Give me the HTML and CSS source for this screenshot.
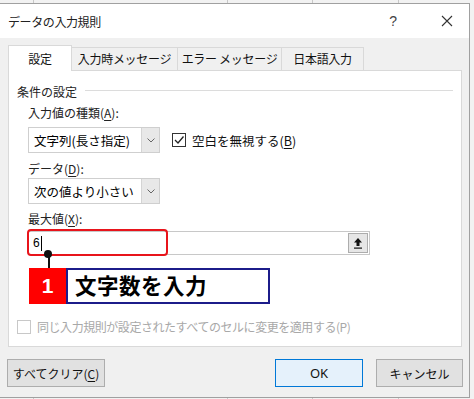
FILE: index.html
```html
<!DOCTYPE html>
<html lang="ja">
<head>
    <meta charset="UTF-8">
    <title>データの入力規則</title>
    <link rel="stylesheet" href="styles.css">
</head>
<body>
    <div class="dialog">
        <div class="titlebar">
            <span class="title">データの入力規則</span>
            <span class="help">?</span>
            <span class="close">
                <svg width="12" height="12" viewBox="0 0 12 12"><path d="M1 1 L11 11 M11 1 L1 11" stroke="#333" stroke-width="1.1" fill="none"/></svg>
            </span>
        </div>

        <div class="tabs">
            <div class="tab active">設定</div>
            <div class="tab">入力時メッセージ</div>
            <div class="tab">エラー メッセージ</div>
            <div class="tab">日本語入力</div>
        </div>

        <div class="panel">
            <div class="group-head">
                <span>条件の設定</span>
                <span class="rule"></span>
            </div>

            <div class="group">
                <div class="label">入力値の種類(<u>A</u>):</div>
                <div class="row">
                    <div class="select">
                        <span class="value">文字列(長さ指定)</span>
                        <span class="arrow"><svg width="8" height="5" viewBox="0 0 8 5"><path d="M0.5 0.5 L4 4 L7.5 0.5" stroke="#666" fill="none"/></svg></span>
                    </div>
                    <label class="check">
                        <span class="box"><svg width="12" height="12" viewBox="0 0 12 12"><path d="M2 6 L5 9 L10.5 2.5" stroke="#222" stroke-width="1.3" fill="none"/></svg></span>
                        <span>空白を無視する(<u>B</u>)</span>
                    </label>
                </div>

                <div class="label l2">データ(<u>D</u>):</div>
                <div class="select s2">
                    <span class="value">次の値より小さい</span>
                    <span class="arrow"><svg width="8" height="5" viewBox="0 0 8 5"><path d="M0.5 0.5 L4 4 L7.5 0.5" stroke="#666" fill="none"/></svg></span>
                </div>

                <div class="label l3">最大値(<u>X</u>):</div>
                <div class="field">
                    <span class="value">6<span class="caret"></span></span>
                    <span class="ref-btn"><svg width="10" height="12" viewBox="0 0 10 12"><path d="M5 1 L9 5.5 L6.5 5.5 L6.5 9 L3.5 9 L3.5 5.5 L1 5.5 Z" fill="#111"/><rect x="1" y="10.5" width="8" height="1.2" fill="#111"/></svg></span>
                    <span class="highlight"></span>
                </div>

                <div class="callout">
                    <span class="dot"></span>
                    <span class="stem"></span>
                    <div class="note">
                        <span class="num">1</span>
                        <span class="note-text">文字数を入力</span>
                    </div>
                </div>
            </div>

            <label class="check disabled">
                <span class="box"></span>
                <span>同じ入力規則が設定されたすべてのセルに変更を適用する(P)</span>
            </label>
        </div>

        <div class="buttons">
            <button class="btn clear">すべてクリア(<u>C</u>)</button>
            <button class="btn ok">OK</button>
            <button class="btn cancel">キャンセル</button>
        </div>
    </div>
</body>
</html>
```

FILE: styles.css
```css
body {
    margin: 0;
    font-family: "Noto Sans CJK JP", "Noto Sans", sans-serif;
    font-size: 12px;
    color: #000;
    background-color: #f2f2f2;
    background-image:
        linear-gradient(to right, transparent 33px, #c8c8c8 33px, #c8c8c8 34px, transparent 34px,
            transparent 227px, #c8c8c8 227px, #c8c8c8 228px, transparent 228px,
            transparent 312px, #c8c8c8 312px, #c8c8c8 313px, transparent 313px,
            transparent 398px, #c8c8c8 398px, #c8c8c8 399px, transparent 399px);
    width: 474px;
    height: 399px;
    overflow: hidden;
}
u {
    text-decoration-thickness: 1px;
    text-underline-offset: 2px;
}

.dialog {
    width: 469px;
    height: 393px;
    margin-top: 3px;
    border: 1px solid #a0a0a0;
    border-left: none;
    background: #f0f0f0;
}

.titlebar {
    height: 34px;
    background: #fff;
    display: flex;
    align-items: center;
    padding-left: 8px;
}
.title {
    font-size: 12px;
    letter-spacing: -0.4px;
    color: #222;
}
.help {
    margin-left: auto;
    font-family: "Liberation Sans", sans-serif;
    font-size: 14px;
    color: #444;
}
.close {
    display: flex;
    margin-left: 44px;
    margin-right: 16px;
}

.tabs {
    display: flex;
    align-items: flex-end;
    height: 32px;
    padding-left: 8px;
}
.tab {
    height: 23px;
    line-height: 22px;
    box-sizing: border-box;
    text-align: center;
    border: 1px solid #d9d9d9;
    border-bottom: none;
    border-left: none;
    background: #f0f0f0;
    font-size: 12px;
    letter-spacing: -0.3px;
    color: #111;
}
.tab.active {
    width: 64px;
    height: 26px;
    line-height: 26px;
    background: #fff;
    border-left: 1px solid #d9d9d9;
    position: relative;
    top: 1px;
}
.tab:nth-child(2) { width: 106px; }
.tab:nth-child(3) { width: 104px; }
.tab:nth-child(4) { width: 82px; }

.panel {
    margin: 0 7px 0 8px;
    height: 277px;
    box-sizing: border-box;
    background: #fff;
    border: 1px solid #d9d9d9;
    padding: 12px 0 0 8px;
}

.group-head {
    display: flex;
    align-items: center;
    height: 16px;
    color: #222;
}
.group-head .rule {
    flex: 1;
    height: 1px;
    background: #dcdcdc;
    margin: 0 8px 2px 8px;
}

.group {
    padding-left: 11px;
}
.label {
    height: 16px;
    line-height: 16px;
    margin-top: 6px;
    color: #222;
}
.l2 { margin-top: 8px; }
.l3 { margin-top: 7px; }

.row {
    display: flex;
    align-items: center;
    margin-top: 6px;
}

.select {
    width: 132px;
    height: 26px;
    box-sizing: border-box;
    border: 1px solid #cfcfcf;
    display: flex;
    align-items: center;
    background: #fff;
}
.select .value {
    flex: 1;
    padding-left: 5px;
    font-size: 12.5px;
}
.select .arrow {
    width: 17px;
    height: 100%;
    display: flex;
    align-items: center;
    justify-content: center;
    background: #e8e8e8;
    border-left: 1px solid #d4d4d4;
}
.s2 { margin-top: 1px; }

.check {
    display: flex;
    align-items: center;
    gap: 6px;
    margin-left: 12px;
    font-size: 12.5px;
    color: #111;
}
.check .box {
    width: 14px;
    height: 14px;
    box-sizing: border-box;
    border: 1px solid #333;
    display: flex;
    align-items: center;
    justify-content: center;
    background: #fff;
}

.field {
    position: relative;
    width: 342px;
    height: 24px;
    box-sizing: border-box;
    margin-top: 4px;
    border: 1px solid #c8c8c8;
    display: flex;
    align-items: center;
}
.field .value {
    flex: 1;
    padding-left: 4px;
    font-family: "Liberation Sans", sans-serif;
    font-size: 12px;
    display: flex;
    align-items: center;
}
.caret {
    display: inline-block;
    width: 1px;
    height: 15px;
    background: #000;
    margin-left: 1px;
}
.ref-btn {
    width: 20px;
    height: 20px;
    box-sizing: border-box;
    margin-right: 1px;
    border: 1px solid #adadad;
    background: #e6e6e6;
    display: flex;
    align-items: center;
    justify-content: center;
}
.highlight {
    position: absolute;
    left: -2px;
    top: -3px;
    width: 141px;
    height: 27px;
    box-sizing: border-box;
    border: 2.5px solid #e8141b;
    border-radius: 4px;
}

.callout {
    position: relative;
    padding-left: 1px;
}
.dot {
    position: absolute;
    left: 16px;
    top: -5px;
    width: 8px;
    height: 8px;
    border-radius: 50%;
    background: #111;
}
.stem {
    display: block;
    width: 2px;
    height: 13px;
    margin-left: 19px;
    background: #111;
}
.note {
    display: flex;
    height: 36px;
}
.num {
    width: 37px;
    background: #f00;
    color: #fff;
    font-family: "Liberation Sans", sans-serif;
    font-weight: bold;
    font-size: 21px;
    display: flex;
    align-items: center;
    justify-content: center;
}
.note-text {
    width: 204px;
    box-sizing: border-box;
    border: 2px solid #1c1c8a;
    font-weight: bold;
    font-size: 21.5px;
    letter-spacing: 0.5px;
    padding-left: 7px;
    line-height: 30px;
    background: #fff;
}

.check.disabled {
    margin-left: 0;
    margin-top: 14px;
    color: #a8a8a8;
    font-size: 12px;
    letter-spacing: -0.45px;
}
.check.disabled .box {
    border-color: #c8c8c8;
}

.buttons {
    display: flex;
    padding: 12px 0 0 7px;
}
.btn {
    height: 28px;
    box-sizing: border-box;
    border: 1px solid #adadad;
    background: #e1e1e1;
    font-family: "Noto Sans CJK JP", "Noto Sans", sans-serif;
    font-size: 12px;
    color: #111;
    padding: 0;
}
.clear { width: 98px; }
.ok {
    width: 88px;
    margin-left: auto;
    background: #e5f1fb;
    border-color: #0078d7;
    font-family: "Noto Sans", sans-serif;
    font-size: 13px;
}
.cancel {
    width: 87px;
    margin-left: 13px;
    margin-right: 6px;
}
```
